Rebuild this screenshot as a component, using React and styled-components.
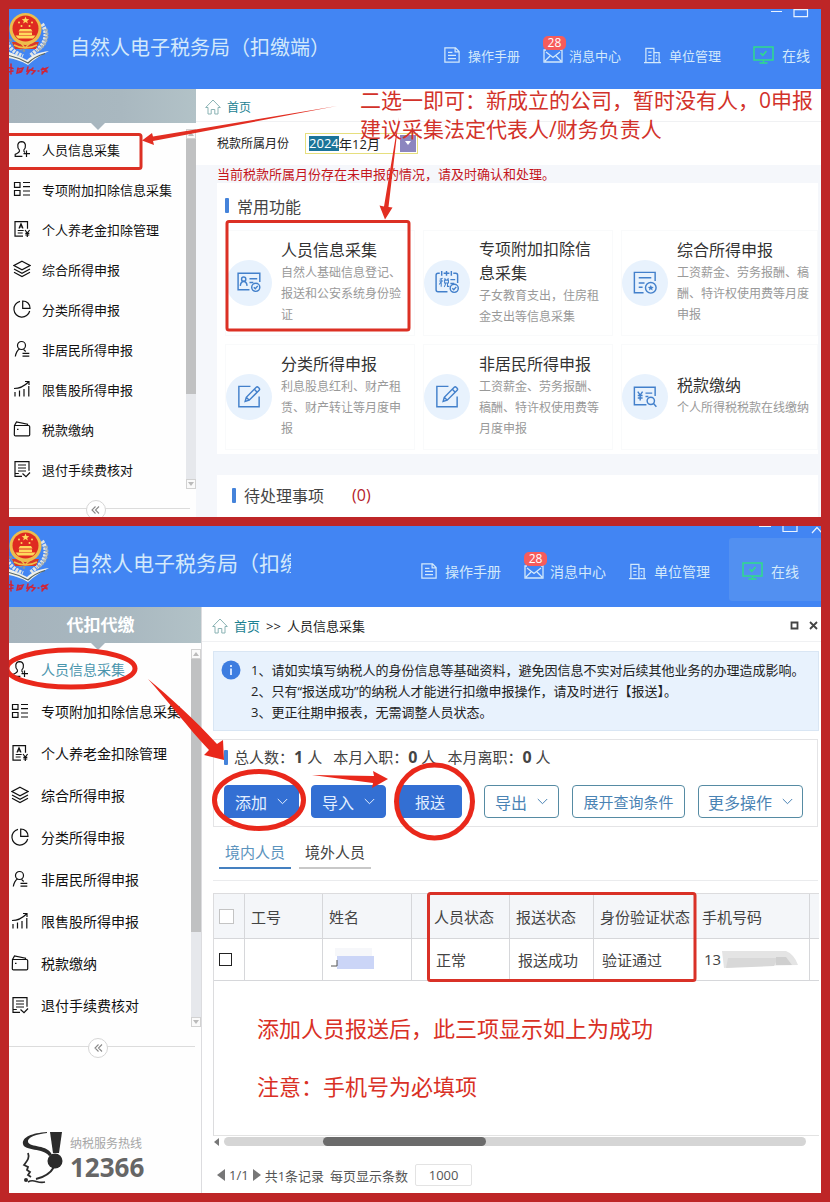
import React from "react"
import styled, { createGlobalStyle, css } from "styled-components"

const GlobalStyle = createGlobalStyle`
  * {
    box-sizing: border-box;
  }
  body {
    margin: 0;
    background: #be2627;
    color: #222;
    font-family: "Open Sans", "Noto Sans CJK SC", sans-serif;
    font-size: 13px;
  }
  button, input {
    font-family: inherit;
    color: inherit;
  }
  a {
    color: inherit;
    text-decoration: none;
  }
`

const Page = styled.div`
  display: flex;
  flex-direction: column;
  gap: 9px;
  padding: 9px;
`

const Screen = styled.section`
  position: relative;
  overflow: hidden;
  background: #fff;
`

const Header = styled.header`
  position: relative;
  display: flex;
  align-items: stretch;
  height: ${p => (p.$large ? 81 : 80)}px;
  background: #4285f3;
  color: #d3e9fb;
`

const Title = styled.h1`
  flex: none;
  display: flex;
  align-items: center;
  width: ${p => (p.$large ? "221px" : "auto")};
  margin: 0 0 0 20px;
  padding-bottom: ${p => (p.$large ? 9 : 6)}px;
  overflow: hidden;
  white-space: nowrap;
  font-size: ${p => (p.$large ? 21 : 20)}px;
  font-weight: 400;
`

const Nav = styled.nav`
  display: flex;
  align-items: stretch;
  gap: 23px;
  margin-left: auto;
  padding: ${p => (p.$large ? "12px 0 6px" : "9px 0 0")};
  font-size: ${p => (p.$large ? 14 : 13)}px;
`

const NavLink = styled.a`
  position: relative;
  display: flex;
  align-items: center;
  gap: ${p => (p.$tight ? 6 : 8)}px;
  padding-top: 3px;
  white-space: nowrap;
`

const StatusLink = styled(NavLink)`
  margin-left: ${p => (p.$large ? -4 : 9)}px;
  padding: 3px ${p => (p.$large ? 22 : 11)}px 0 ${p => (p.$large ? 13 : 0)}px;
  border-radius: 3px 0 0 3px;
  background: ${p => (p.$large ? "#5290f1" : "none")};
  font-size: 14px;
`

const IconBox = styled.span`
  position: relative;
  display: flex;
`

const Badge = styled.span`
  position: absolute;
  left: 0;
  bottom: 13px;
  width: 23px;
  height: 14px;
  border-radius: 5px;
  background: #f65c5c;
  color: #fff;
  font-size: 12px;
  line-height: 14px;
  text-align: center;
`

const WindowControls = styled.svg`
  position: absolute;
  top: 0;
  right: 0;
`

const Body = styled.div`
  display: flex;
  align-items: stretch;
`

const Sidebar = styled.aside`
  flex: none;
  display: flex;
  flex-direction: column;
  width: ${p => (p.$large ? 193 : 187)}px;
  border-right: ${p => (p.$large ? "1px solid #dcdcdf" : "none")};
  background: #fefefe;
`

const Caption = styled.div`
  position: relative;
  height: ${p => (p.$large ? 36 : 34)}px;
  margin-bottom: 6px;
  padding-right: 9px;
  background: linear-gradient(90deg, #a5b3bc, #a9b8c0 60%, #b2c2c7);
  color: #fff;
  font-size: 17px;
  font-weight: 700;
  line-height: 36px;
  text-align: center;
  &::after {
    content: "";
    position: absolute;
    left: 82px;
    top: 100%;
    border: 7px solid transparent;
    border-top-color: #a8b6bf;
    border-bottom: 0;
  }
`

const MenuArea = styled.div`
  display: flex;
`

const MenuList = styled.ul`
  flex: 1;
  min-width: 0;
  margin: 0;
  padding: 0;
  list-style: none;
  color: #111;
`

const MenuLink = styled.a`
  display: flex;
  align-items: center;
  gap: ${p => (p.$large ? 12 : 11)}px;
  height: ${p => (p.$large ? 42 : 40)}px;
  padding-left: ${p => (p.$large ? 2 : 4)}px;
  padding-bottom: ${p => (p.$large ? 2 : 0)}px;
  font-size: ${p => (p.$large ? 14 : 13)}px;
  white-space: nowrap;
  span {
    color: ${p => (p.$active ? "#4a95ad" : "inherit")};
  }
`

const Track = styled.div`
  flex: none;
  display: flex;
  flex-direction: column;
  width: 10px;
  background: #e6e8ec;
`

const TrackButton = styled.button`
  display: flex;
  align-items: center;
  justify-content: center;
  height: 10px;
  padding: 0;
  border: 1px solid #d2d2d2;
  background: #fafafa;
`

const Thumb = styled.div`
  flex: 1;
  margin-bottom: 85px;
  background: #c0c1c2;
`

const Collapse = styled.div`
  position: relative;
  display: flex;
  justify-content: center;
  padding: 11px 14px 0 0;
  margin-bottom: ${p => (p.$large ? 0 : -3)}px;
  background: linear-gradient(#dcdcdc, #dcdcdc) 0 19px / calc(100% - 6px) 1px
    no-repeat;
`

const CollapseButton = styled.button`
  display: flex;
  align-items: center;
  justify-content: center;
  width: 20px;
  height: 20px;
  padding: 0;
  border: 1px solid #d6d6d6;
  border-radius: 50%;
  background: #fff;
`

const Hotline = styled.div`
  display: flex;
  align-items: center;
  gap: 7px;
  margin-top: auto;
  padding: 72px 0 8px 13px;
`

const HotlineText = styled.div`
  display: flex;
  flex-direction: column;
  color: #a6a6a6;
  font-size: 12px;
  line-height: 18px;
  strong {
    color: #666;
    font-size: 26px;
    line-height: 28px;
  }
`

const Main = styled.main`
  flex: 1;
  min-width: 0;
  background: ${p => (p.$tinted ? "#f5f7fb" : "#fff")};
`

const Crumbs = styled.div`
  display: flex;
  align-items: center;
  gap: 6px;
  height: ${p => (p.$large ? 35 : 33)}px;
  padding: ${p => (p.$large ? "3px 3px 0 10px" : "4px 0 0 9px")};
  border-bottom: 1px solid #f0f1f3;
  background: #fff;
  font-size: ${p => (p.$large ? 13 : 12)}px;
  a {
    color: #1c8292;
  }
`

const PaneButtons = styled.div`
  display: flex;
  gap: 10px;
  margin-left: auto;
`

const PaneButton = styled.button`
  display: flex;
  padding: 0;
  border: 0;
  background: none;
`

const PeriodRow = styled.div`
  display: flex;
  align-items: center;
  gap: 16px;
  height: 43px;
  padding: 0 0 1px 21px;
  background: #fff;
  font-size: 12px;
`

const PeriodBox = styled.div`
  display: flex;
  align-items: center;
  width: 113px;
  height: 21px;
  padding: 0 1px 0 3px;
  border: 1px solid #e6df7e;
  background: #fff;
  font-size: 13px;
`

const YearInput = styled.input`
  width: 30px;
  height: 15px;
  padding: 0;
  border: 0;
  background: #1b7499;
  color: #fff;
  font-size: 13px;
`

const PeriodButton = styled.button`
  display: flex;
  align-items: center;
  justify-content: center;
  width: 16px;
  height: 17px;
  margin-left: auto;
  padding: 0;
  border: 0;
  background: #8c86bf;
`

const Warning = styled.p`
  margin: 0;
  padding-left: 21px;
  color: #c4161c;
  font-size: 13px;
  line-height: 18px;
`

const Card = styled.section`
  margin: 0 3px ${p => (p.$last ? 0 : 21)}px 21px;
  padding-left: 8px;
  background: #fff;
`

const CardTitle = styled.h2`
  display: flex;
  align-items: center;
  gap: 8px;
  height: ${p => (p.$indent ? 42 : 43)}px;
  margin: 0;
  padding: ${p => (p.$indent ? "0 0 2px 7px" : "2px 0 0")};
  color: #444;
  font-size: 16px;
  font-weight: 400;
`

const Bar = styled.i`
  width: 4px;
  height: 15px;
  border-radius: 1px;
  background: #4583da;
`

const Count = styled.span`
  margin-left: 20px;
  color: #b5202b;
`

const Tiles = styled.div`
  display: grid;
  grid-template-columns: 190px 190px 1fr;
  grid-auto-rows: 114px;
  column-gap: 8px;
`

const Tile = styled.a`
  display: flex;
  align-items: center;
  gap: 9px;
  margin: 4px 0;
  padding-right: 6px;
  border: 1px solid #f9fafb;
`

const TileIcon = styled.span`
  flex: none;
  display: flex;
  align-items: center;
  justify-content: center;
  width: 46px;
  height: 46px;
  border-radius: 50%;
  background: #e8f2fd;
`

const TileText = styled.span`
  padding-bottom: 3px;
  color: #999;
  font-size: 12px;
  line-height: 21px;
  line-break: strict;
  b {
    display: block;
    color: #333;
    font-size: 16px;
    font-weight: 400;
    line-height: 24px;
  }
`

const Notice = styled.div`
  display: flex;
  gap: 10px;
  margin: 9px 2px 8px 11px;
  padding: 8px 0 7px 7px;
  border: 1px solid #d9e6f4;
  background: #e8f2fd;
  p {
    margin: 0;
    line-height: 21px;
    white-space: nowrap;
  }
`

const Panel = styled.section`
  height: 88px;
  margin: 0 3px 9px 11px;
  padding: 5px 0 0 10px;
  border: 1px solid #e4e4e6;
`

const Stats = styled.div`
  display: flex;
  align-items: center;
  gap: 11px;
  height: 24px;
  color: #444;
  font-size: 15px;
  span {
    white-space: nowrap;
  }
  b {
    margin-right: 4px;
    font-size: 16px;
  }
  ${Bar} {
    margin-right: -5px;
  }
`

const Actions = styled.div`
  display: flex;
  gap: 13px;
  margin-top: 16px;
`

const ActionGroup = styled.div`
  display: flex;
  gap: 12px;
  margin-right: 9px;
`

const ActionButton = styled.button`
  display: flex;
  align-items: center;
  justify-content: center;
  gap: 10px;
  height: 33px;
  padding: 0;
  width: ${p => p.$width}px;
  border: 1px solid #568ba3;
  border-radius: 4px;
  background: #fff;
  color: #4a83b4;
  font-size: ${p => (p.$plain ? 15 : 16)}px;
  white-space: nowrap;
  ${p =>
    p.$primary &&
    css`
      border-color: #336fd3;
      background: #336fd3;
      color: #e4efff;
    `}
`

const Tabs = styled.div`
  display: flex;
  gap: 8px;
  margin: 0 3px 12px 11px;
  padding: 0 0 11px 6px;
  border-bottom: 1px solid #eaebed;
`

const Tab = styled.button`
  width: 72px;
  height: 33px;
  padding: 0;
  border: 0;
  border-bottom: 2px solid ${p => (p.$active ? "#4580c0" : "#c8c8c8")};
  background: none;
  color: ${p => (p.$active ? "#5b93bd" : "#444")};
  font-size: 15px;
`

const Sheet = styled.div`
  margin: 0 2px 0 11px;
  padding-bottom: 20px;
  border-left: 1px solid #dcdcde;
  border-bottom: 1px solid #e3e3e3;
`

const Table = styled.table`
  width: 100%;
  table-layout: fixed;
  border-collapse: separate;
  border-spacing: 0;
  border-top: 1px solid #dcdcde;
  color: #444;
  font-size: 15px;
  th,
  td {
    padding: 0 0 0 7px;
    border-right: 1px solid #d6d7da;
    border-bottom: 1px solid #d6d7da;
    font-weight: 400;
    text-align: left;
    white-space: nowrap;
  }
  th {
    height: 45px;
    padding-left: 6px;
    background: #f4f6f9;
  }
  td {
    height: 42px;
    padding-left: 8px;
  }
  th:last-child,
  td:last-child {
    border-right: 0;
  }
  th:first-child,
  td:first-child {
    padding-left: 5px;
  }
`

const Check = styled.input`
  appearance: none;
  display: block;
  width: ${p => (p.$dark ? 13 : 15)}px;
  height: ${p => (p.$dark ? 13 : 15)}px;
  margin: 0;
  border: 1px solid ${p => (p.$dark ? "#222" : "#c4c4c4")};
  background: #fff;
`

const Cover = styled.svg`
  display: inline-block;
  vertical-align: middle;
`

const Remarks = styled.div`
  margin: 18px 0 0 43px;
  color: #d93025;
  font-size: 22px;
  line-height: 58px;
  p {
    margin: 0;
  }
`

const HScroll = styled.div`
  display: flex;
  align-items: center;
  gap: 5px;
  height: 11px;
  margin: 0 15px 0 12px;
`

const HTrack = styled.div`
  flex: 1;
  height: 9px;
  padding-left: 99px;
  border-radius: 5px;
  background: #d5d5d5;
`

const HThumb = styled.div`
  width: 163px;
  height: 9px;
  border-radius: 5px;
  background: #6b6b6b;
`

const Pager = styled.footer`
  display: flex;
  align-items: center;
  gap: 4px;
  padding: 17px 0 7px 15px;
  color: #555;
  label {
    margin: 0 3px 0 2px;
  }
`

const SizeInput = styled.input`
  width: 57px;
  height: 22px;
  padding: 0;
  border: 1px solid #e3e3e3;
  border-radius: 2px;
  font-size: 13px;
  text-align: center;
`

const Overlay = styled.svg`
  position: absolute;
  top: 0;
  left: 0;
  pointer-events: none;
`

const Callout = styled.p`
  position: absolute;
  left: 351px;
  top: 77px;
  margin: 0;
  color: #d2322a;
  font-size: 21px;
  line-height: 29px;
  white-space: nowrap;
`

const Line = ({ size = 18, box = 18, width = 1.2, children }) => (
  <svg
    width={size}
    height={size}
    viewBox={`0 0 ${box} ${box}`}
    fill="none"
    stroke="currentColor"
    strokeWidth={width}
    aria-hidden="true"
  >
    {children}
  </svg>
)

const menuIcons = {
  person: (
    <>
      <path d="M6.5 10.2C3.8 7.4 4 1.8 8.6 1.6c4.6.2 4.8 5.8 2.1 8.6" />
      <path d="M6.5 10.2c.3 2-.6 2.800-4.300 4.200v1.900h7.200M10.700 10.200c0 1 .4 1.700 1.300 2.200M13.500 10.500v6.500M10.500 13.600h6.500" />
    </>
  ),
  list: (
    <path d="M1.500 2.500h5.500v4.800H1.500zM1.500 10.500h5.500v4.800H1.500zM10 2.500h7M10 6.700h7M10 11h7M10 15h7" />
  ),
  pension: (
    <>
      <path d="M10 16.200H2V1.700h12.500v7" />
      <path d="M6 8.500 8 3.800l2 4.700M6.700 7h2.600M4.700 10.500h6M4.700 13h5M12 10l2.300 3 2.300-3M14.300 13v4M12.300 13.300h4M12.300 15h4" />
    </>
  ),
  layers: (
    <path d="M9 1.300 17 5.500 9 9.700 1 5.500zM1 9l8 4.200L17 9M1 12.300l8 4.200 8-4.200" />
  ),
  pie: (
    <>
      <path d="M7 1.300A8 8 0 1 0 16.700 11" />
      <path d="M9.700 1v7.300H17C17 4 14 1 9.700 1z" />
    </>
  ),
  resident: (
    <>
      <circle cx="8.500" cy="5.500" r="4" />
      <path d="M6.500 9C4 10.500 3 12.500 2.300 16.500M10.500 9.300l2.200 2.200M9.500 13.300h6.800M9.500 16.200h6.800" />
    </>
  ),
  chart: (
    <path d="M2 12v4.500M6.500 10.500v6M11 9v7.500M15.800 6v10.500M1 8.500C6 8.500 11 6.500 15.500 2M12 1.500h4v3.600" />
  ),
  wallet: (
    <>
      <path d="M1.500 5.500h14q1.200 0 1.200 1.200v8q0 1.200-1.200 1.200h-13q-1.200 0-1.200-1.200zM1.500 5.500 3.500 2l11 2.200v1.300" />
      <path d="M4 9.300h1.500" />
    </>
  ),
  refund: (
    <path d="M9 16.300H2V1.700h14v9M5 5h8M5 8h8M5 11h8M1.800 13.500h4M9.500 13.500l3.500 3.200 4-4.200" />
  ),
}

const menu = [
  ["person", "人员信息采集"],
  ["list", "专项附加扣除信息采集"],
  ["pension", "个人养老金扣除管理"],
  ["layers", "综合所得申报"],
  ["pie", "分类所得申报"],
  ["resident", "非居民所得申报"],
  ["chart", "限售股所得申报"],
  ["wallet", "税款缴纳"],
  ["refund", "退付手续费核对"],
]

const tileIcons = {
  card: (
    <>
      <path d="M15 21.500H3.200V4.500h22.500v9" />
      <circle cx="9" cy="10.500" r="2.200" />
      <path d="M5.500 17.500c.3-3 1.500-4.500 3.500-4.500s3.200 1.500 3.500 4.500M15 10h8M15 14h4" />
      <circle cx="21.500" cy="19" r="4.200" />
      <path d="m19.500 19 1.500 1.500 2.600-3" />
    </>
  ),
  tax: (
    <>
      <path d="M15 23.500H5.200q-2 0-2-2v-15q0-2 2-2H7M11 4.500h6M21 4.500h2.500q2 0 2 2v8M9 2v5M14 2v5M19 2v5M18 11h5M18 15h4" />
      <path
        d="M10 9.500 7 10.500M8.500 10v8.500M6.500 12.500h4M8.500 13l-2 3M12 9.500l1 1.500M16 9.500 15 11M12 11.500h4v3h-4zM13 14.500c0 2-.5 3-1.500 4M15 14.500v3.500h2"
        strokeWidth="1.100"
      />
      <circle cx="22" cy="20" r="4.200" />
      <path d="m20 20 1.500 1.500 2.600-3" />
    </>
  ),
  form: (
    <>
      <path d="M13 24.500H3.500v-21H25v9M8 9h13M8 14.500h6M8 19h4" />
      <circle cx="20.500" cy="19.500" r="5.500" />
      <path
        d="m20.500 16.500.9 2 2.100.2-1.600 1.400.5 2.100-1.900-1.100-1.900 1.100.5-2.100-1.600-1.400 2.100-.2z"
        fill="currentColor"
        stroke="none"
      />
    </>
  ),
  edit: (
    <>
      <path d="M16 3.500H4v21h21V14" />
      <path d="m10.500 19 1.200-4.200L22 4.500q1-1 2 0l1 1q1 1 0 2L14.700 17.800zM20 6.500l3 3M11.700 14.800l3 3" />
    </>
  ),
  pay: (
    <>
      <path d="M16 22.500H3.500v-18H25v9M7 9l2.500 3.500L12 9M9.500 12.500V18M7 13h5M7 15.500h5M15 10.500h7M15 14h3" />
      <circle cx="20.500" cy="18.500" r="3.800" />
      <path d="m23.300 21.300 3 3.200" />
    </>
  ),
}

const tiles = [
  ["card", "人员信息采集", "自然人基础信息登记、报送和公安系统身份验证"],
  ["tax", "专项附加扣除信息采集", "子女教育支出，住房租金支出等信息采集"],
  ["form", "综合所得申报", "工资薪金、劳务报酬、稿酬、特许权使用费等月度申报"],
  ["edit", "分类所得申报", "利息股息红利、财产租赁、财产转让等月度申报"],
  ["edit", "非居民所得申报", "工资薪金、劳务报酬、稿酬、特许权使用费等月度申报"],
  ["pay", "税款缴纳", "个人所得税税款在线缴纳"],
]

const Emblem = () => (
  <svg width="41" height="76" viewBox="0 0 41 76" aria-hidden="true">
    <g fill="none" stroke="#dfe4e5" strokeWidth="4" strokeDasharray="2.500 1">
      <path d="M33 15c6 8 4 19-4 25l-8 7" />
      <path d="M37 20c3 10-2 18-9 22" stroke="#a9b1b1" strokeWidth="3" />
      <path d="M-2 33c3 7 8 11 16 14" />
      <path d="M1 30c3 6 8 9 15 12" stroke="#8e9696" strokeWidth="2.500" />
    </g>
    <path d="M0 43c6 2 12 5 18 8 5-5 12-8 22-9-8 4-14 8-21 14C12 52 6 50 0 49z" fill="#f0f1ec" />
    <path d="M0 46.500c7 1.500 13 4 19 7.500 5-5 10-7.500 17-9.500" fill="none" stroke="#57645f" strokeWidth="1.200" />
    <path d="M3 33h27l-3 7H6z" fill="#d8372a" />
    <path d="M5 36c7 4 16 4 23 0M12 34l4 5 5-5" fill="none" stroke="#efbe48" strokeWidth="1.500" />
    <circle cx="16.500" cy="20" r="16" fill="#edbd4d" />
    <circle cx="16.500" cy="19.500" r="13" fill="#df2a21" />
    <path d="m16.500 7.500 1 2.600 2.800.1-2.200 1.700.8 2.700-2.400-1.500-2.400 1.500.8-2.700-2.200-1.700 2.800-.1z" fill="#ffd95c" />
    <g fill="#ffd95c">
      <circle cx="10" cy="13.500" r="1" />
      <circle cx="12.500" cy="17" r="1" />
      <circle cx="20.500" cy="17" r="1" />
      <circle cx="23" cy="13.500" r="1" />
      <path d="M11 20h11l1.500 2.500h-14zM10 23.500h13V26H10zM6.500 26.500h20l-2.500 3H9z" />
    </g>
    <g fill="none" stroke="#cf2438" strokeWidth="1.500" strokeLinecap="round">
      <path d="M-2 59c3-.5 5-.5 6 .5M-1 63l5-1M2 55v10M9 59l-1 5 4-1 2-4-4 1M10 62h3M19 58l-1 4 3-1-3 4M24 59l-2 2 4 1-3 3M29 62h1M34 59l-2 2 6-2-5 6M36 61l2 2M33 63l5-1" />
    </g>
  </svg>
)

const TopBar = ({ large }) => (
  <Header $large={large}>
    <Emblem />
    <Title $large={large}>自然人电子税务局（扣缴端）</Title>
    <Nav $large={large}>
      <NavLink href="#manual">
        <Line size={16} width={1.4}>
          <path d="M1 1h12l4 4v12H1zM12.500 1v4.500H17M4.500 6h5M4.500 9.500h9M4.500 13h9" />
        </Line>
        操作手册
      </NavLink>
      <NavLink href="#messages" $tight>
        <IconBox>
          <svg width="20" height="16" viewBox="0 0 20 16" fill="none" stroke="currentColor" strokeWidth="1.300">
            <path d="M3 3H1v12h18V3h-2M3 5l7 5.500L17 5M2 14l5-5M18 14l-5-5" />
          </svg>
          <Badge>28</Badge>
        </IconBox>
        消息中心
      </NavLink>
      <NavLink href="#company">
        <Line size={17} width={1.300}>
          <path d="M2 16.500V1.500h8.500v15M10.500 6H16v10.500M0 16.500h18M4.500 5.500H8M4.500 9H8M4.500 12.500H8M12.500 9.500H14M12.500 13H14" />
        </Line>
        单位管理
      </NavLink>
      <StatusLink href="#status" $large={large}>
        <svg width="21" height="18" viewBox="0 0 21 18" fill="none" stroke="#2fdc8b" strokeWidth="1.500">
          <path d="M1 1h19v13H1zM10.500 14v2.500M6.500 17h8M7.500 7l2.300 2.300L13.500 5" />
        </svg>
        在线
      </StatusLink>
    </Nav>
    <WindowControls width="70" height="10" fill="none" stroke="#e9f3ff" strokeWidth="1.200">
      {large ? (
        <path d="M8 .5h12M32-4v9.500h14V-4M61 7l5-5.500 5 5.500" />
      ) : (
        <path d="M20 2.500h11M43 .6h13.500v7H43z" />
      )}
    </WindowControls>
  </Header>
)

const SideMenu = ({ large, caption, active }) => (
  <>
    <Caption $large={large}>{caption}</Caption>
    <MenuArea>
      <MenuList>
        {menu.map(([icon, label], i) => (
          <li key={label}>
            <MenuLink href={`#${icon}`} $large={large} $active={i === active}>
              <Line>{menuIcons[icon]}</Line>
              <span>{label}</span>
            </MenuLink>
          </li>
        ))}
      </MenuList>
      <Track>
        <TrackButton aria-label="向上滚动">
          <svg width="6" height="4" fill="#bbb">
            <path d="M0 4h6L3 0z" />
          </svg>
        </TrackButton>
        <Thumb />
        <TrackButton aria-label="向下滚动">
          <svg width="6" height="4" fill="#bbb">
            <path d="M0 0h6L3 4z" />
          </svg>
        </TrackButton>
      </Track>
    </MenuArea>
    <Collapse $large={large}>
      <CollapseButton aria-label="收起菜单">
        <svg width="9" height="8" fill="none" stroke="#888" strokeWidth="1.100">
          <path d="M4.500.5 1 4l3.500 3.500M8 .5 4.500 4 8 7.500" />
        </svg>
      </CollapseButton>
    </Collapse>
  </>
)

const HomeIcon = () => (
  <svg width="16" height="16" viewBox="0 0 16 16" fill="none" stroke="#8ab3b4" strokeWidth="1">
    <path d="M.7 8.500 8 1l7.300 7.500H13V15H9.800v-4.500H6.200V15H3V8.500z" />
  </svg>
)

const Chevron = () => (
  <svg width="11" height="7" fill="none" stroke="currentColor" strokeWidth="1">
    <path d="m.8 1 4.700 4.700L10.200 1" />
  </svg>
)

const HomeScreen = () => (
  <Screen>
    <TopBar />
    <Body>
      <Sidebar>
        <SideMenu />
      </Sidebar>
      <Main $tinted>
        <Crumbs>
          <HomeIcon />
          <a href="#home">首页</a>
        </Crumbs>
        <PeriodRow>
          <label htmlFor="period">税款所属月份</label>
          <PeriodBox>
            <YearInput id="period" defaultValue="2024" />
            年12月
            <PeriodButton aria-label="选择月份">
              <svg width="6" height="4" fill="#fff">
                <path d="M0 0h6L3 4z" />
              </svg>
            </PeriodButton>
          </PeriodBox>
        </PeriodRow>
        <Warning>当前税款所属月份存在未申报的情况，请及时确认和处理。</Warning>
        <Card>
          <CardTitle>
            <Bar />
            常用功能
          </CardTitle>
          <Tiles>
            {tiles.map(([icon, title, text]) => (
              <Tile key={title} href={`#${icon}`}>
                <TileIcon>
                  <svg
                    width="28"
                    height="28"
                    viewBox="0 0 29 29"
                    fill="none"
                    color="#4380cb"
                    stroke="currentColor"
                    strokeWidth="1.500"
                  >
                    {tileIcons[icon]}
                  </svg>
                </TileIcon>
                <TileText>
                  <b>{title}</b>
                  {text}
                </TileText>
              </Tile>
            ))}
          </Tiles>
        </Card>
        <Card $last>
          <CardTitle $indent>
            <Bar />
            待处理事项
            <Count>(0)</Count>
          </CardTitle>
        </Card>
      </Main>
    </Body>
    <Callout>
      二选一即可：新成立的公司，暂时没有人，0申报
      <br />
      建议采集法定代表人/财务负责人
    </Callout>
    <Overlay width="812" height="508" viewBox="9 9 812 508">
      <g fill="none" stroke="#dc3024" strokeWidth="3">
        <rect x="6" y="134.500" width="135" height="34" rx="2" />
        <rect x="227" y="221.500" width="182" height="108.500" rx="2" />
      </g>
      <g fill="#e22e22">
        <path d="M337 106 153 141l1 4-12-4.500 10-7.500 1 3.500z" />
        <path d="m399 117-10.500 90 4 .5-7.500 12-5.500-14 4.500 1z" />
      </g>
    </Overlay>
  </Screen>
)

const PeopleTable = () => (
  <Table>
    <colgroup>
      <col width="31" />
      <col width="78" />
      <col width="89" />
      <col width="16" />
      <col width="82" />
      <col width="84" />
      <col width="102" />
      <col width="114" />
      <col />
    </colgroup>
    <thead>
      <tr>
        <th>
          <Check type="checkbox" aria-label="全选" />
        </th>
        <th>工号</th>
        <th>姓名</th>
        <th />
        <th>人员状态</th>
        <th>报送状态</th>
        <th>身份验证状态</th>
        <th>手机号码</th>
        <th />
      </tr>
    </thead>
    <tbody>
      <tr>
        <td>
          <Check type="checkbox" aria-label="选择" $dark />
        </td>
        <td />
        <td>
          <Cover width="46" height="24">
            <path d="M4 0h37v8H4z" fill="#f6f7fa" />
            <path d="M6 8h37v13H6z" fill="#cbd5f7" />
            <path d="M0 18h6v-6" fill="none" stroke="#555" />
          </Cover>
        </td>
        <td />
        <td>正常</td>
        <td>报送成功</td>
        <td>验证通过</td>
        <td>
          13
          <Cover width="78" height="20">
            <path d="M1 1h64q8 3 12 14l-50 1-24 2z" fill="#e4e4e4" />
            <path d="M7 8h50l-4 8-48 2z" fill="#d8d8d8" />
            <path d="M55 7h10l6 8H55z" fill="#cfcfcf" />
          </Cover>
        </td>
        <td />
      </tr>
    </tbody>
  </Table>
)

const PeopleScreen = () => (
  <Screen>
    <TopBar large />
    <Body>
      <Sidebar $large>
        <SideMenu large caption="代扣代缴" active={0} />
        <Hotline>
          <svg width="41" height="54" viewBox="0 0 41 54" fill="none" stroke="#2b2b2b">
            <path d="M28 1h12l-3 21h-6z" fill="#2b2b2b" stroke="none" />
            <circle cx="33" cy="30" r="7.500" fill="#2b2b2b" stroke="none" />
            <path d="M25 1C10 2 0 6 1 13c1 7 21 4 26 12l3-1C26 13 8 17 6 11 5 6 15 3 25 2z" fill="#2b2b2b" stroke="none" />
            <path d="M6 22c2 5-1 8-4 12l4 2-1 3 3 2-2 3 3 2" strokeWidth="1.800" />
            <path d="M32 36c-4 7-9 10-18 12" strokeWidth="2" />
            <path d="M6 51c6-4 9 2 17 0" strokeWidth="1.600" />
            <circle cx="4" cy="49" r="2" fill="#2b2b2b" stroke="none" />
          </svg>
          <HotlineText>
            纳税服务热线
            <strong>12366</strong>
          </HotlineText>
        </Hotline>
      </Sidebar>
      <Main>
        <Crumbs $large>
          <HomeIcon />
          <a href="#home">首页</a>
          <span>&gt;&gt;</span>
          <span>人员信息采集</span>
          <PaneButtons>
            <PaneButton aria-label="还原">
              <svg width="9" height="9" fill="none" stroke="#444" strokeWidth="1.800">
                <path d="M1.500 1.500h6v6h-6z" />
              </svg>
            </PaneButton>
            <PaneButton aria-label="关闭">
              <svg width="9" height="9" fill="none" stroke="#444" strokeWidth="1.800">
                <path d="m1 1 7 7M8 1 1 8" />
              </svg>
            </PaneButton>
          </PaneButtons>
        </Crumbs>
        <Notice>
          <svg width="20" height="20">
            <circle cx="10" cy="10" r="9.500" fill="#3d7de0" />
            <path d="M10 8.500V15M10 5v2" stroke="#cfe2ff" strokeWidth="2" />
          </svg>
          <div>
            <p>1、请如实填写纳税人的身份信息等基础资料，避免因信息不实对后续其他业务的办理造成影响。</p>
            <p>2、只有“报送成功”的纳税人才能进行扣缴申报操作，请及时进行【报送】。</p>
            <p>3、更正往期申报表，无需调整人员状态。</p>
          </div>
        </Notice>
        <Panel>
          <Stats>
            <Bar />
            <span>
              总人数：<b>1</b>人
            </span>
            <span>
              本月入职：<b>0</b>人
            </span>
            <span>
              本月离职：<b>0</b>人
            </span>
          </Stats>
          <Actions>
            <ActionGroup>
              <ActionButton $primary $width={75}>
                添加
                <Chevron />
              </ActionButton>
              <ActionButton $primary $width={75}>
                导入
                <Chevron />
              </ActionButton>
              <ActionButton $primary $plain $width={64}>
                报送
              </ActionButton>
            </ActionGroup>
            <ActionButton $width={75}>
              导出
              <Chevron />
            </ActionButton>
            <ActionButton $plain $width={113}>
              展开查询条件
            </ActionButton>
            <ActionButton $width={105}>
              更多操作
              <Chevron />
            </ActionButton>
          </Actions>
        </Panel>
        <Tabs>
          <Tab $active>境内人员</Tab>
          <Tab>境外人员</Tab>
        </Tabs>
        <Sheet>
          <PeopleTable />
          <Remarks>
            <p>添加人员报送后，此三项显示如上为成功</p>
            <p>注意：手机号为必填项</p>
          </Remarks>
        </Sheet>
        <HScroll>
          <svg width="5" height="8" fill="#777">
            <path d="M5 0v8L0 4z" />
          </svg>
          <HTrack>
            <HThumb />
          </HTrack>
        </HScroll>
        <Pager>
          <svg width="8" height="12" fill="#777">
            <path d="M8 0v12L0 6z" />
          </svg>
          <span>1/1</span>
          <svg width="8" height="12" fill="#777">
            <path d="M0 0v12l8-6z" />
          </svg>
          <span>共1条记录</span>
          <label htmlFor="size">每页显示条数</label>
          <SizeInput id="size" defaultValue="1000" />
        </Pager>
      </Main>
    </Body>
    <Overlay width="812" height="667" viewBox="9 526 812 667">
      <g fill="none" stroke="#e9281b" strokeWidth="5">
        <ellipse cx="71" cy="668.500" rx="64" ry="18.500" />
        <ellipse cx="259" cy="800" rx="44.500" ry="28.500" />
        <ellipse cx="434.500" cy="801.500" rx="38" ry="36.500" />
        <rect x="428.500" y="893.500" width="266.500" height="87" rx="2" strokeWidth="3" stroke="#d93127" />
      </g>
      <g fill="#e9281b">
        <path d="M148 679c22 18 46 40 69 65l6-4 1 20-20-5 5-5c-20-21-41-49-61-71z" />
        <path d="m312 775 62 1-1-5 15 8-16 9 1-5z" />
      </g>
    </Overlay>
  </Screen>
)

const App = () => (
  <Page>
    <GlobalStyle />
    <HomeScreen />
    <PeopleScreen />
  </Page>
)

export default App
